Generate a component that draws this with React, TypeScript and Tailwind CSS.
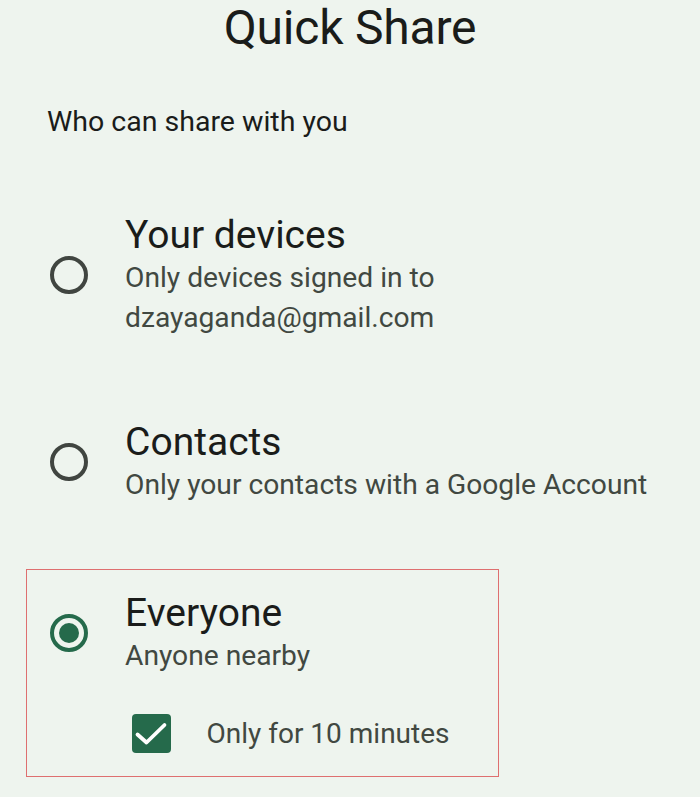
import { useState } from "react";

type Option = {
  id: string;
  title: string;
  lines: string[];
};

const OPTIONS: Option[] = [
  { id: "devices", title: "Your devices", lines: ["Only devices signed in to", "dzayaganda@gmail.com"] },
  { id: "contacts", title: "Contacts", lines: ["Only your contacts with a Google Account"] },
  { id: "everyone", title: "Everyone", lines: ["Anyone nearby"] },
];

function Radio({ checked }: { checked: boolean }) {
  return (
    <span
      className={`flex h-[38px] w-[38px] shrink-0 items-center justify-center rounded-full border-[4px] ${
        checked ? "border-[#256a4b]" : "border-[#404540]"
      }`}
    >
      {checked && <span className="h-[20px] w-[20px] rounded-full bg-[#256a4b]" />}
    </span>
  );
}

export default function App() {
  const [selected, setSelected] = useState("everyone");
  const [tenMin, setTenMin] = useState(true);

  return (
    <div className="min-h-[797px] w-[700px] bg-[#eef4ee] font-['Roboto',sans-serif] text-[#1a1c1a]">
      {/* Header */}
      <h1 className="text-center text-[48px] leading-[56px] font-normal tracking-[-0.2px]">
        Quick Share
      </h1>

      <p className="mt-[49px] pl-[47px] text-[28.5px] leading-[34px] text-[#1a1c1a]">
        Who can share with you
      </p>

      {/* Options */}
      <div className="mt-[73px] flex flex-col">
        {OPTIONS.map((opt) => {
          const checked = selected === opt.id;
          const isEveryone = opt.id === "everyone";
          return (
            <div
              key={opt.id}
              className={
                isEveryone
                  ? "ml-[26px] mt-[64px] w-[473px] border-[1.5px] border-[#de6f6f] pb-[23px] pt-[19.5px]"
                  : opt.id === "contacts"
                  ? "mt-[81px]"
                  : ""
              }
            >
              <button
                type="button"
                onClick={() => setSelected(opt.id)}
                className={`flex w-full items-center text-left ${isEveryone ? "pl-[23px]" : "pl-[50px]"}`}
              >
                <Radio checked={checked} />
                <div className="ml-[37px] flex flex-col">
                  <span className="text-[39px] leading-[46px] text-[#1a1c1a]">{opt.title}</span>
                  {opt.lines.map((l) => (
                    <span key={l} className="text-[28.2px] leading-[40px] text-[#414841]">
                      {l}
                    </span>
                  ))}
                </div>
              </button>

              {isEveryone && (
                <button
                  type="button"
                  onClick={() => setTenMin(!tenMin)}
                  className="mt-[38.5px] flex items-center pl-[104.5px]"
                >
                  <span
                    className={`flex h-[39px] w-[39px] items-center justify-center rounded-[4px] ${
                      tenMin ? "bg-[#256a4b]" : "border-[3px] border-[#404540]"
                    }`}
                  >
                    {tenMin && (
                      <svg viewBox="0 0 39 39" className="h-[39px] w-[39px]" fill="none">
                        <path
                          d="M5.5 20.5L14.5 28.5L32.5 11"
                          stroke="white"
                          strokeWidth="3.8"
                          strokeLinecap="round"
                          strokeLinejoin="round"
                        />
                      </svg>
                    )}
                  </span>
                  <span className="ml-[36px] text-[28px] leading-[39px] text-[#414841]">
                    Only for 10 minutes
                  </span>
                </button>
              )}
            </div>
          );
        })}
      </div>
    </div>
  );
}
